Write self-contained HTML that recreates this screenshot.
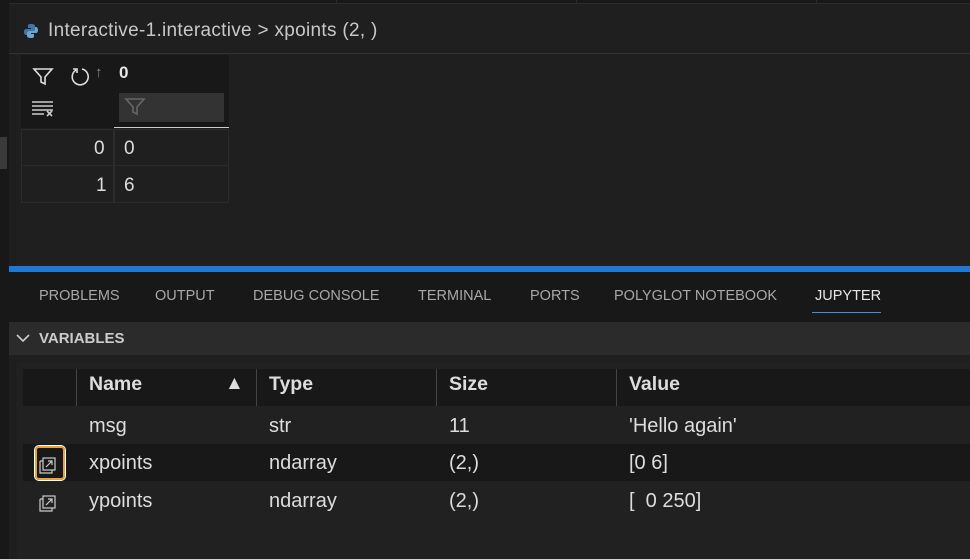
<!DOCTYPE html>
<html><head><style>
*{margin:0;padding:0;box-sizing:border-box}
body{width:970px;height:559px;background:#1f1f1f;font-family:"Liberation Sans",sans-serif;color:#ccc;position:relative;overflow:hidden}
.a{position:absolute}
.t{top:288px;font-size:14.5px;color:#a8a8a8;white-space:nowrap}
.c{font-size:20px;color:#ddd;white-space:nowrap}
.h{font-size:19.5px;font-weight:bold;color:#ddd;top:373px}
</style></head><body>
<div class="a" style="left:0;top:0;width:9px;height:559px;background:#181818"></div>
<div class="a" style="left:0;top:137px;width:7px;height:32px;background:#3a3a3a"></div>
<div class="a" style="left:9px;top:0;width:961px;height:4px;background:#181818;border-bottom:1px solid #2b2b2b"></div>
<div class="a" style="left:336px;top:0;width:1px;height:4px;background:#2b2b2b"></div>
<div class="a" style="left:576px;top:0;width:1px;height:4px;background:#2b2b2b"></div>
<div class="a" style="left:816px;top:0;width:1px;height:4px;background:#2b2b2b"></div>
<div class="a" style="left:9px;top:53px;width:961px;height:1px;background:#333"></div>
<svg class="a" style="left:23px;top:23px" width="16" height="16" viewBox="0 0 16 16"><path d="M8 1C5 1 5 2 5 3v2h3v1H3C1.5 6 1 7.5 1 9s.7 3 2 3h1v-2c0-1.3 1-2 2-2h4c1 0 2-1 2-2V3c0-1-1-2-4-2z" fill="#3c78aa"/><path d="M8 15c3 0 3-1 3-2v-2H8v-1h5c1.5 0 2-1.5 2-3s-.7-3-2-3h-1v2c0 1.3-1 2-2 2H6c-1 0-2 1-2 2v3c0 1 1 2 4 2z" fill="#6ba6cf"/></svg>
<div class="a" style="left:48px;top:20px;font-size:19px;color:#c8c8c8;white-space:nowrap;letter-spacing:0.3px">Interactive-1.interactive &gt; xpoints (2, )</div>
<div class="a" style="left:21px;top:55px;width:208px;height:73px;background:#181818"></div>
<svg class="a" style="left:32px;top:66px" width="22" height="22" viewBox="0 0 22 22"><path d="M2 3h18l-7 8v7l-4-2v-5z" fill="none" stroke="#e0e0e0" stroke-width="1.6"/></svg>
<svg class="a" style="left:70px;top:67px" width="22" height="20" viewBox="0 0 22 20"><path d="M6 3A8 8 0 1 0 12 2" fill="none" stroke="#e0e0e0" stroke-width="1.6"/><path d="M3 2h4v4" fill="none" stroke="#e0e0e0" stroke-width="1.6"/></svg>
<div class="a" style="left:95px;top:64px;font-size:15px;color:#888">↑</div>
<div class="a" style="left:119px;top:63px;font-size:17px;font-weight:bold;color:#e6e6e6">0</div>
<svg class="a" style="left:32px;top:100px" width="24" height="18" viewBox="0 0 24 18"><path d="M0 2h21M0 6h21M0 10h21M0 14h12" stroke="#ccc" stroke-width="1.4"/><path d="M15 11l5 5M20 11l-5 5" stroke="#ccc" stroke-width="1.6"/></svg>
<div class="a" style="left:119px;top:93px;width:105px;height:29px;background:#333"></div>
<svg class="a" style="left:124px;top:97px" width="22" height="20" viewBox="0 0 22 20"><path d="M2 2h18l-7 8v7l-4-2v-5z" fill="none" stroke="#666" stroke-width="1.6"/></svg>
<div class="a" style="left:114px;top:127px;width:115px;height:1px;background:#ccc"></div>
<div class="a" style="left:21px;top:129px;width:208px;height:74px;border:1px solid #2b2b2b"></div>
<div class="a" style="left:21px;top:165px;width:208px;height:1px;background:#2b2b2b"></div>
<div class="a" style="left:113px;top:129px;width:2px;height:74px;background:#2b2b2b"></div>
<div class="a" style="left:94px;top:138px;font-size:19px;color:#ddd">0</div>
<div class="a" style="left:124px;top:138px;font-size:19px;color:#ddd">0</div>
<div class="a" style="left:96px;top:175px;font-size:19px;color:#ddd">1</div>
<div class="a" style="left:124px;top:175px;font-size:19px;color:#ddd">6</div>
<div class="a" style="left:9px;top:266px;width:961px;height:6px;background:#1f78d1"></div>
<div class="a" style="left:9px;top:272px;width:961px;height:50px;background:#181818"></div>
<div class="a t" style="left:39px">PROBLEMS</div>
<div class="a t" style="left:155px">OUTPUT</div>
<div class="a t" style="left:253px">DEBUG CONSOLE</div>
<div class="a t" style="left:418px">TERMINAL</div>
<div class="a t" style="left:530px">PORTS</div>
<div class="a t" style="left:614px">POLYGLOT NOTEBOOK</div>
<div class="a t" style="left:815px;color:#e6e6e6">JUPYTER</div>
<div class="a" style="top:312px;left:812px;width:69px;height:1px;background:#3b8eea"></div>
<div class="a" style="left:9px;top:322px;width:961px;height:33px;background:#2b2b2b"></div>
<svg class="a" style="left:15px;top:332px" width="18" height="14" viewBox="0 0 18 14"><path d="M2 3l6 6 6-6" fill="none" stroke="#ccc" stroke-width="1.6"/></svg>
<div class="a" style="left:39px;top:330px;font-size:15px;font-weight:bold;color:#ccc">VARIABLES</div>
<div class="a" style="left:17px;top:362px;width:953px;height:197px;background:#212121"></div>
<div class="a" style="left:23px;top:369px;width:947px;height:37px;background:#181818"></div>
<div class="a" style="left:23px;top:444px;width:947px;height:37px;background:#181818"></div>
<div class="a" style="left:76px;top:369px;width:1px;height:37px;background:#444"></div>
<div class="a" style="left:256px;top:369px;width:1px;height:37px;background:#444"></div>
<div class="a" style="left:436px;top:369px;width:1px;height:37px;background:#444"></div>
<div class="a" style="left:616px;top:369px;width:1px;height:37px;background:#444"></div>
<div class="a h" style="left:89px">Name</div>
<div class="a" style="left:225px;top:373px;font-size:19px;color:#ddd">▲</div>
<div class="a h" style="left:269px">Type</div>
<div class="a h" style="left:449px">Size</div>
<div class="a h" style="left:629px">Value</div>
<div class="a c" style="left:89px;top:415px">msg</div>
<div class="a c" style="left:269px;top:415px">str</div>
<div class="a c" style="left:449px;top:415px">11</div>
<div class="a c" style="left:629px;top:415px">'Hello again'</div>
<div class="a c" style="left:89px;top:452px">xpoints</div>
<div class="a c" style="left:269px;top:452px">ndarray</div>
<div class="a c" style="left:449px;top:452px">(2,)</div>
<div class="a c" style="left:629px;top:452px">[0 6]</div>
<div class="a c" style="left:89px;top:490px">ypoints</div>
<div class="a c" style="left:269px;top:490px">ndarray</div>
<div class="a c" style="left:449px;top:490px">(2,)</div>
<div class="a c" style="left:629px;top:490px">[&nbsp; 0 250]</div>
<div class="a" style="left:35px;top:446px;width:30px;height:34px;border:2px solid #e8a33c;border-radius:4px;box-shadow:0 0 0 1px #fff"></div>
<svg class="a" style="left:37px;top:455px" width="20" height="20" viewBox="0 0 20 20"><path d="M3 6h3M3 6v12h12v-3" fill="none" stroke="#ccc" stroke-width="1.2"/><rect x="6" y="3" width="12" height="12" fill="none" stroke="#ccc" stroke-width="1.2"/><path d="M9 12l6-6M11 6h4v4" fill="none" stroke="#ccc" stroke-width="1.2"/></svg>
<svg class="a" style="left:37px;top:493px" width="20" height="20" viewBox="0 0 20 20"><path d="M3 6h3M3 6v12h12v-3" fill="none" stroke="#ccc" stroke-width="1.2"/><rect x="6" y="3" width="12" height="12" fill="none" stroke="#ccc" stroke-width="1.2"/><path d="M9 12l6-6M11 6h4v4" fill="none" stroke="#ccc" stroke-width="1.2"/></svg>
</body></html>
